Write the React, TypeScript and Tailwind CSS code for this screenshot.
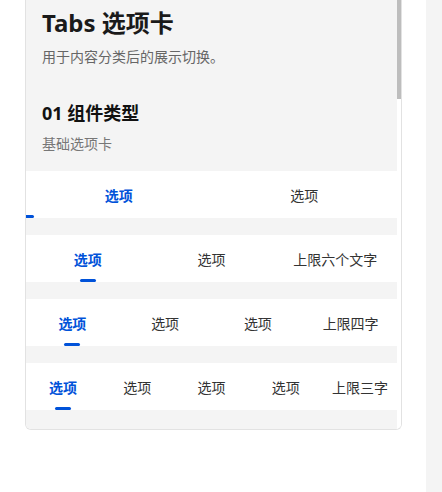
const font = 'font-["Noto_Sans","Noto_Sans_CJK_SC",sans-serif]';

type TabRowProps = { labels: string[]; indicator?: 'center' | 'left' };

function TabRow({ labels, indicator = 'center' }: TabRowProps) {
  return (
    <div className="relative flex h-[47px] bg-white">
      {labels.map((label, i) => (
        <div key={i} className="relative flex flex-1 justify-center pt-[14px]">
          <span
            className={
              i === 0
                ? 'text-[14px] leading-[22px] font-semibold text-[#0052d9] whitespace-nowrap'
                : 'text-[14px] leading-[22px] text-[#333] whitespace-nowrap'
            }
          >
            {label}
          </span>
          {i === 0 && indicator === 'center' && (
            <span className="absolute bottom-0 left-1/2 h-[3px] w-[16px] -translate-x-1/2 rounded-full bg-[#0052d9]" />
          )}
        </div>
      ))}
      {indicator === 'left' && (
        <span className="absolute bottom-0 left-0 h-[3px] w-[8px] rounded-r-sm bg-[#0052d9]" />
      )}
    </div>
  );
}

export default function App() {
  return (
    <div className={`flex h-[492px] w-[442px] bg-white ${font}`}>
      <div className="ml-[25px] flex h-[430px] w-[377px] overflow-hidden rounded-b-md border-x border-b border-[#e2e2e2]">
        <div className="flex w-[371px] flex-col bg-[#f4f4f4]">
          <div className="px-[16px] pt-[7px]">
            <h1 className="text-[24px] leading-[32px] font-bold text-[#1a1a1a]">Tabs 选项卡</h1>
            <p className="mt-[7px] text-[14px] leading-[22px] text-[#666]">用于内容分类后的展示切换。</p>
            <h2 className="mt-[32px] text-[18px] leading-[26px] font-bold text-[#111]">01 组件类型</h2>
            <p className="mt-[7px] text-[14px] leading-[22px] text-[#777]">基础选项卡</p>
          </div>
          <div className="mt-[16px] flex flex-col gap-[17px]">
            <TabRow labels={['选项', '选项']} indicator="left" />
            <TabRow labels={['选项', '选项', '上限六个文字']} />
            <TabRow labels={['选项', '选项', '选项', '上限四字']} />
            <TabRow labels={['选项', '选项', '选项', '选项', '上限三字']} />
          </div>
        </div>
        <div className="w-[4px] bg-white">
          <div className="h-[99px] w-[4px] bg-[#bdbdbd]" />
        </div>
      </div>
      <div className="flex-1" />
      <div className="h-full w-[16px] bg-[#f4f4f4]" />
    </div>
  );
}
